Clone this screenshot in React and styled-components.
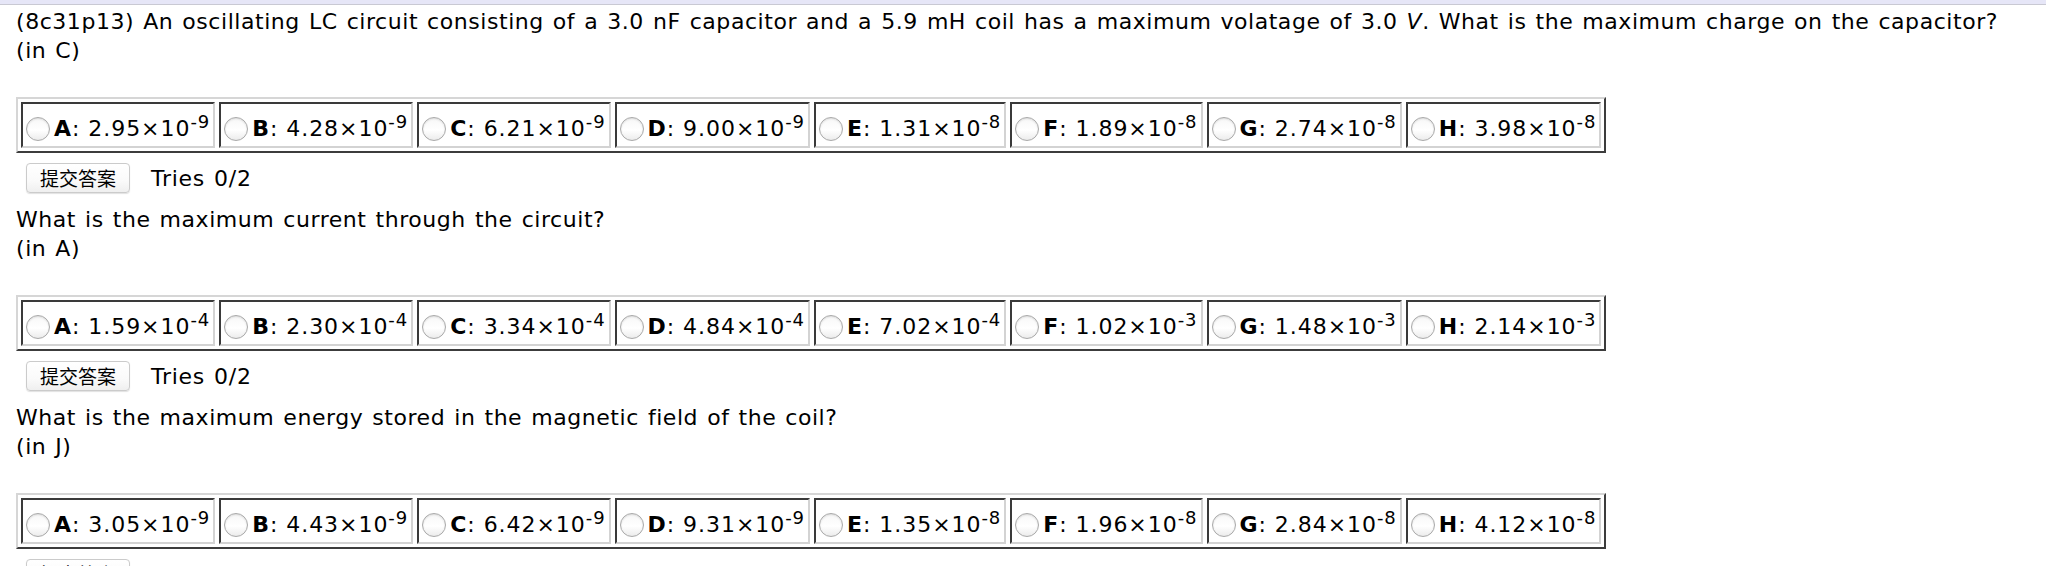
import React from "react";
import styled, { createGlobalStyle } from "styled-components";

const GlobalStyle = createGlobalStyle`
  html, body {
    margin: 0;
    padding: 0;
    background: #ffffff;
  }
  body {
    font-family: "DejaVu Sans", Verdana, sans-serif;
    color: #000000;
  }
`;

const Page = styled.div`
  width: 2046px;
  height: 566px;
  overflow: hidden;
  background: #ffffff;
`;

// lavender strip across the top of the page
const TopBar = styled.div`
  height: 4px;
  background: #e6e6f7;
  border-bottom: 1px solid #c9c9d3;
`;

const Content = styled.div`
  padding: 2px 0 0 16px;
`;

const Block = styled.div`
  display: flex;
  flex-direction: column;
  align-items: flex-start;
  padding-bottom: 12px;
`;

const Question = styled.div`
  font-size: 22px;
  line-height: 29px;
  letter-spacing: 0.55px;
  word-spacing: 1.5px;
  white-space: nowrap;
`;

const ChoiceTable = styled.div`
  display: flex;
  gap: 4px;
  margin-top: 32px;
  padding: 3px;
  border-style: solid;
  border-width: 2px;
  border-color: #d6d6d6 #3c3c3c #3c3c3c #d6d6d6;
`;

const Choice = styled.div`
  display: flex;
  align-items: flex-start;
  height: 42px;
  padding: 0 3px 0 3px;
  border-style: solid;
  border-width: 2px;
  border-color: #3a3a3a #d3d3d3 #d3d3d3 #3a3a3a;
  white-space: nowrap;
`;

const Radio = styled.span`
  display: block;
  flex: none;
  width: 24px;
  height: 24px;
  margin-top: 13px;
  margin-right: 4px;
  box-sizing: border-box;
  border-radius: 50%;
  border: 1px solid #a9a9a9;
  background: linear-gradient(180deg, #f7f7f7 0%, #ffffff 55%, #ececec 100%);
  box-shadow: inset 0 1px 2px rgba(0, 0, 0, 0.12);
`;

const ChoiceLabel = styled.span`
  display: block;
  margin-top: 14px;
  font-size: 22px;
  line-height: 22px;
  letter-spacing: 0.95px;
`;

const Letter = styled.b`
  font-weight: bold;
`;

const Sup = styled.sup`
  font-size: 18px;
  line-height: 0;
  vertical-align: baseline;
  position: relative;
  top: -8px;
`;

const SubmitRow = styled.div`
  display: flex;
  align-items: center;
  gap: 21px;
  margin-top: 10px;
  padding-left: 10px;
`;

const SubmitButton = styled.button`
  height: 30px;
  padding: 0 13px;
  font-family: "Noto Sans CJK SC", "DejaVu Sans", sans-serif;
  font-size: 19px;
  line-height: 28px;
  color: #000000;
  background: linear-gradient(180deg, #ffffff 0%, #fafafa 60%, #efefef 100%);
  border: 1px solid #cbcbcb;
  border-radius: 4px;
  box-shadow: 0 1px 1px rgba(0, 0, 0, 0.12);
`;

const Tries = styled.span`
  font-size: 22px;
  letter-spacing: 0.7px;
  word-spacing: 1.5px;
`;

const problems = [
  {
    text: (
      <>
        (8c31p13) An oscillating LC circuit consisting of a 3.0 nF capacitor and a 5.9 mH coil has a
        maximum volatage of 3.0 <i>V</i>. What is the maximum charge on the capacitor?
      </>
    ),
    unit: "(in C)",
    choices: [
      ["A", "2.95", "-9"],
      ["B", "4.28", "-9"],
      ["C", "6.21", "-9"],
      ["D", "9.00", "-9"],
      ["E", "1.31", "-8"],
      ["F", "1.89", "-8"],
      ["G", "2.74", "-8"],
      ["H", "3.98", "-8"],
    ],
  },
  {
    text: "What is the maximum current through the circuit?",
    unit: "(in A)",
    choices: [
      ["A", "1.59", "-4"],
      ["B", "2.30", "-4"],
      ["C", "3.34", "-4"],
      ["D", "4.84", "-4"],
      ["E", "7.02", "-4"],
      ["F", "1.02", "-3"],
      ["G", "1.48", "-3"],
      ["H", "2.14", "-3"],
    ],
  },
  {
    text: "What is the maximum energy stored in the magnetic field of the coil?",
    unit: "(in J)",
    choices: [
      ["A", "3.05", "-9"],
      ["B", "4.43", "-9"],
      ["C", "6.42", "-9"],
      ["D", "9.31", "-9"],
      ["E", "1.35", "-8"],
      ["F", "1.96", "-8"],
      ["G", "2.84", "-8"],
      ["H", "4.12", "-8"],
    ],
  },
];

const Problem = ({ text, unit, choices }) => (
  <Block>
    <Question>
      {text}
      <br />
      {unit}
    </Question>
    <ChoiceTable>
      {choices.map(([letter, value, exp]) => (
        <Choice key={letter}>
          <Radio />
          <ChoiceLabel>
            <Letter>{letter}</Letter>: {value}×10<Sup>{exp}</Sup>
          </ChoiceLabel>
        </Choice>
      ))}
    </ChoiceTable>
    <SubmitRow>
      <SubmitButton>提交答案</SubmitButton>
      <Tries>Tries 0/2</Tries>
    </SubmitRow>
  </Block>
);

const App = () => (
  <Page>
    <GlobalStyle />
    <TopBar />
    <Content>
      {problems.map((p, i) => (
        <Problem key={i} {...p} />
      ))}
    </Content>
  </Page>
);

export default App;
